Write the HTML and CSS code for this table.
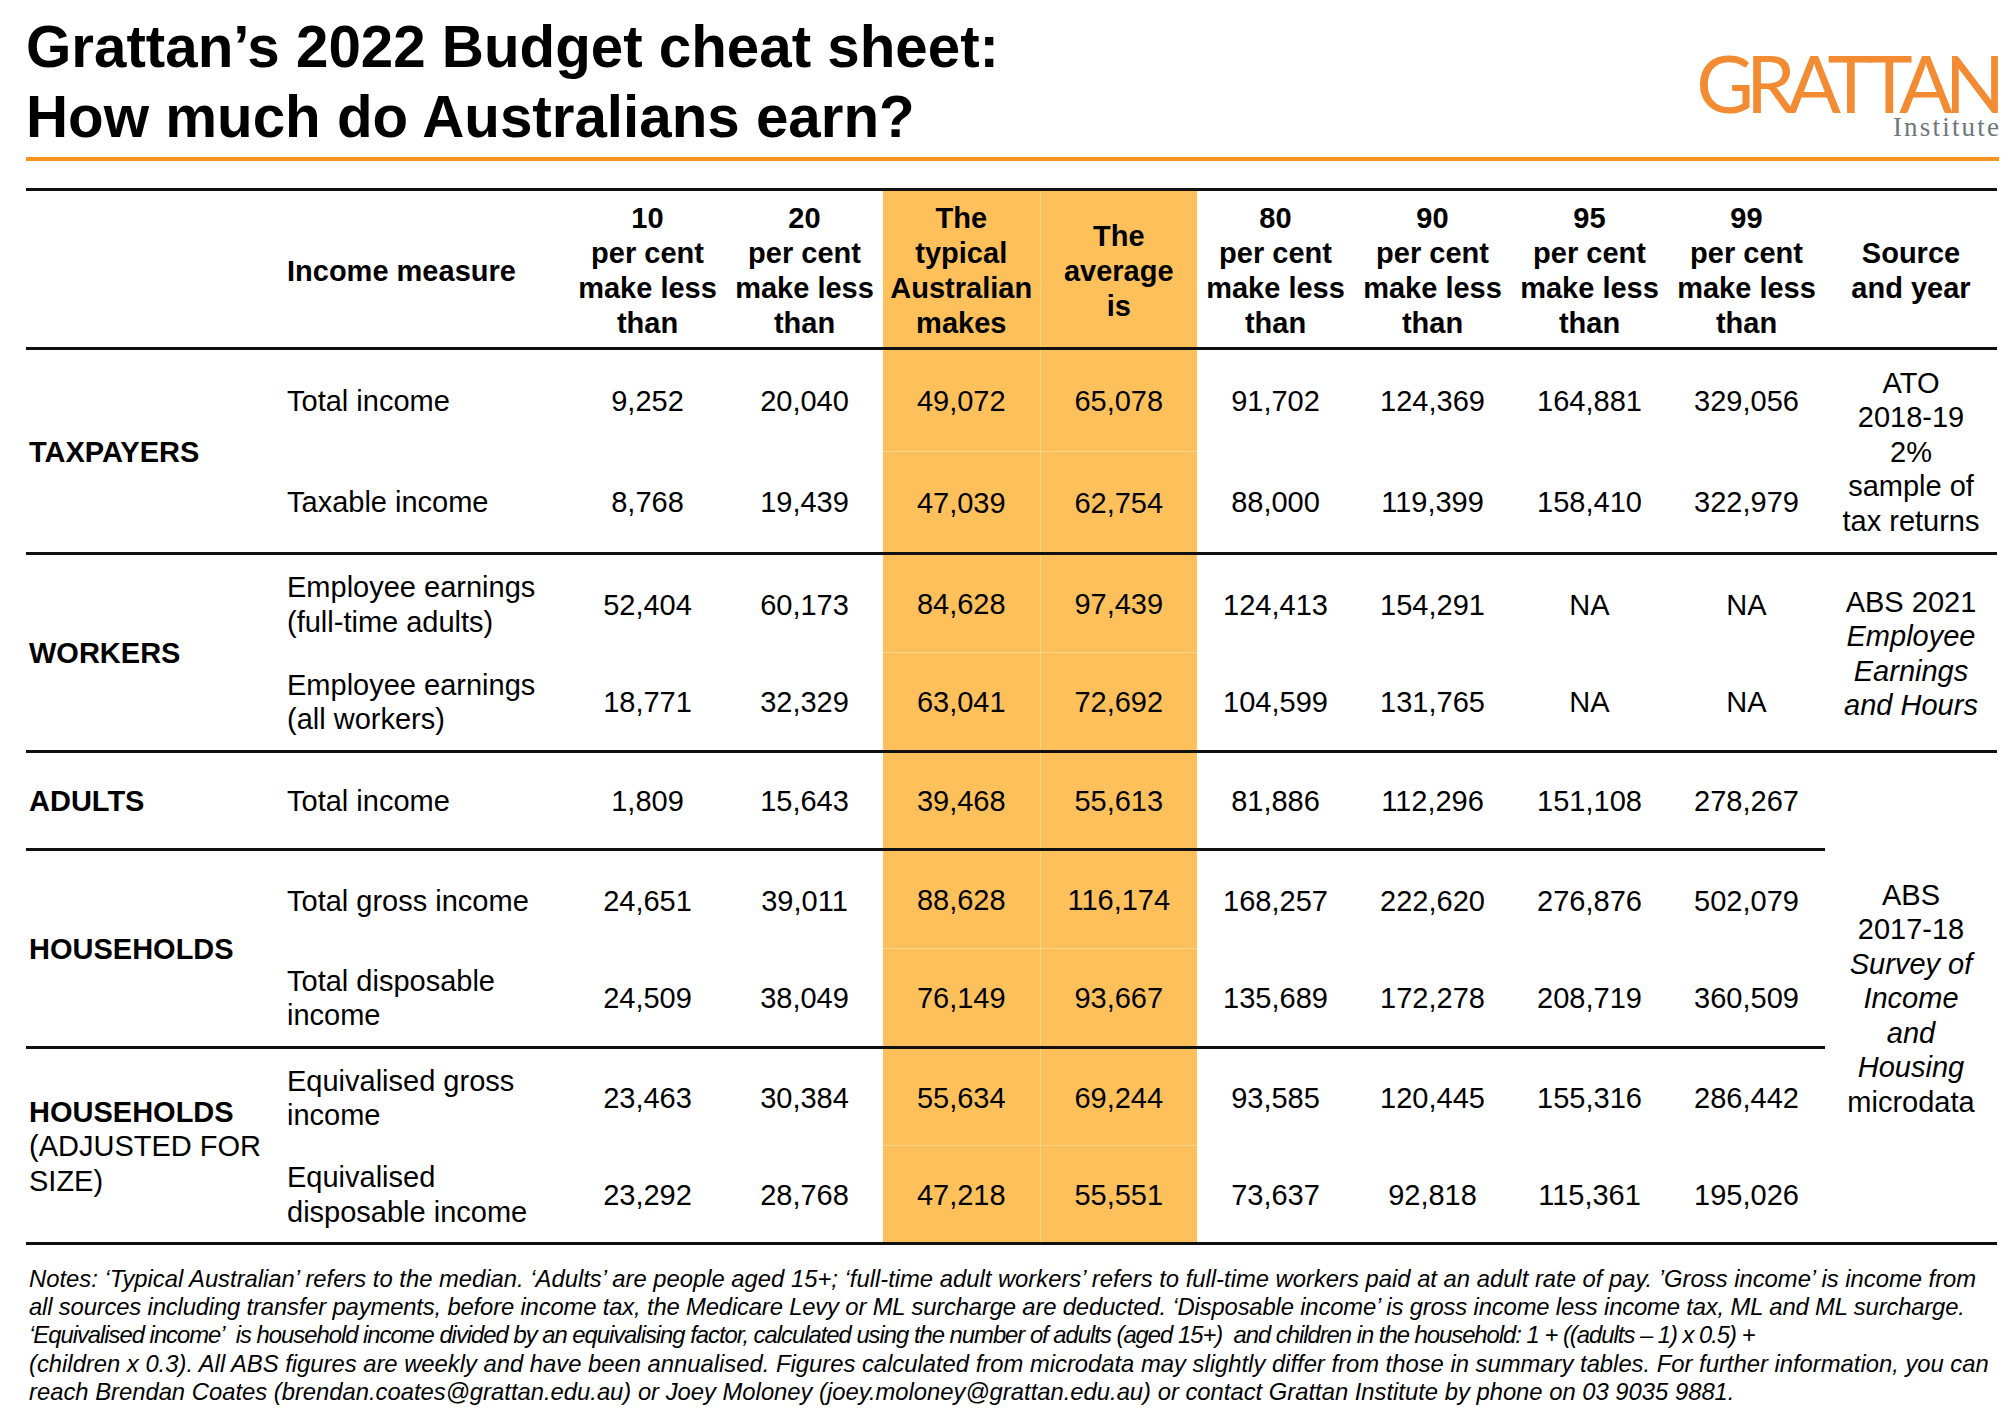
FILE: index.html
```html
<!DOCTYPE html>
<html lang="en">
<head>
<meta charset="utf-8">
<title>Grattan's 2022 Budget cheat sheet</title>
<link rel="stylesheet" href="styles.css">
</head>
<body>
<div class="page">
  <header class="header">
    <h1 class="title">Grattan’s 2022 Budget cheat sheet:<br>How much do Australians earn?</h1>
    <div class="logo">
      <div class="logo-main">GRATTAN</div>
      <div class="logo-sub">Institute</div>
    </div>
  </header>
  <div class="rule"></div>

  <table class="cheat">
    <colgroup>
      <col class="c-group">
      <col class="c-measure">
      <col class="c-num" span="8">
      <col class="c-src">
    </colgroup>
    <thead>
      <tr class="h-head">
        <th></th>
        <th class="measure-h">Income measure</th>
        <th>10<br>per cent<br>make less<br>than</th>
        <th>20<br>per cent<br>make less<br>than</th>
        <th class="hl typ">The<br>typical<br>Australian<br>makes</th>
        <th class="hl">The<br>average<br>is</th>
        <th>80<br>per cent<br>make less<br>than</th>
        <th>90<br>per cent<br>make less<br>than</th>
        <th>95<br>per cent<br>make less<br>than</th>
        <th>99<br>per cent<br>make less<br>than</th>
        <th>Source<br>and year</th>
      </tr>
    </thead>
    <tbody>
      <tr class="h-tax">
        <td class="group end" rowspan="2">TAXPAYERS</td>
        <td class="measure">Total income</td>
        <td>9,252</td><td>20,040</td><td class="hl typ">49,072</td><td class="hl">65,078</td>
        <td>91,702</td><td>124,369</td><td>164,881</td><td>329,056</td>
        <td class="src end" rowspan="2">ATO<br>2018-19<br>2%<br>sample of<br>tax returns</td>
      </tr>
      <tr class="h-tax sub">
        <td class="measure end">Taxable income</td>
        <td class="end">8,768</td><td class="end">19,439</td><td class="hl typ end">47,039</td><td class="hl end">62,754</td>
        <td class="end">88,000</td><td class="end">119,399</td><td class="end">158,410</td><td class="end">322,979</td>
      </tr>

      <tr class="h-wk">
        <td class="group end" rowspan="2">WORKERS</td>
        <td class="measure">Employee earnings (full-time adults)</td>
        <td>52,404</td><td>60,173</td><td class="hl typ">84,628</td><td class="hl">97,439</td>
        <td>124,413</td><td>154,291</td><td>NA</td><td>NA</td>
        <td class="src end" rowspan="2">ABS 2021<br><em>Employee<br>Earnings<br>and Hours</em></td>
      </tr>
      <tr class="h-wk sub">
        <td class="measure end">Employee earnings (all workers)</td>
        <td class="end">18,771</td><td class="end">32,329</td><td class="hl typ end">63,041</td><td class="hl end">72,692</td>
        <td class="end">104,599</td><td class="end">131,765</td><td class="end">NA</td><td class="end">NA</td>
      </tr>

      <tr class="h-std">
        <td class="group end">ADULTS</td>
        <td class="measure end">Total income</td>
        <td class="end">1,809</td><td class="end">15,643</td><td class="hl typ end">39,468</td><td class="hl end">55,613</td>
        <td class="end">81,886</td><td class="end">112,296</td><td class="end">151,108</td><td class="end">278,267</td>
        <td class="src end" rowspan="5">ABS<br>2017-18<br><em>Survey of<br>Income<br>and<br>Housing</em><br>microdata</td>
      </tr>

      <tr class="h-hh">
        <td class="group end" rowspan="2">HOUSEHOLDS</td>
        <td class="measure">Total gross income</td>
        <td>24,651</td><td>39,011</td><td class="hl typ">88,628</td><td class="hl">116,174</td>
        <td>168,257</td><td>222,620</td><td>276,876</td><td>502,079</td>
      </tr>
      <tr class="h-hh sub">
        <td class="measure end">Total disposable income</td>
        <td class="end">24,509</td><td class="end">38,049</td><td class="hl typ end">76,149</td><td class="hl end">93,667</td>
        <td class="end">135,689</td><td class="end">172,278</td><td class="end">208,719</td><td class="end">360,509</td>
      </tr>

      <tr class="h-std">
        <td class="group end" rowspan="2">HOUSEHOLDS <span class="group-note">(ADJUSTED FOR SIZE)</span></td>
        <td class="measure">Equivalised gross income</td>
        <td>23,463</td><td>30,384</td><td class="hl typ">55,634</td><td class="hl">69,244</td>
        <td>93,585</td><td>120,445</td><td>155,316</td><td>286,442</td>
      </tr>
      <tr class="h-std sub">
        <td class="measure end">Equivalised disposable income</td>
        <td class="end">23,292</td><td class="end">28,768</td><td class="hl typ end">47,218</td><td class="hl end">55,551</td>
        <td class="end">73,637</td><td class="end">92,818</td><td class="end">115,361</td><td class="end">195,026</td>
      </tr>
    </tbody>
  </table>

  <p class="notes">
    <span class="nl">Notes: ‘Typical Australian’ refers to the median. ‘Adults’ are people aged 15+; ‘full-time adult workers’ refers to full-time workers paid at an adult rate of pay. ’Gross income’ is income from</span>
    <span class="nl l2">all sources including transfer payments, before income tax, the Medicare Levy or ML surcharge are deducted. ‘Disposable income’ is gross income less income tax, ML and ML surcharge.</span>
    <span class="nl l3">‘Equivalised income’&nbsp; is household income divided by an equivalising factor, calculated using the number of adults (aged 15+)&nbsp; and children in the household: 1 + ((adults – 1) x 0.5) +</span>
    <span class="nl">(children x 0.3). All ABS figures are weekly and have been annualised. Figures calculated from microdata may slightly differ from those in summary tables. For further information, you can</span>
    <span class="nl">reach Brendan Coates (brendan.coates@grattan.edu.au) or Joey Moloney (joey.moloney@grattan.edu.au) or contact Grattan Institute by phone on 03 9035 9881.</span>
  </p>
</div>
</body>
</html>
```

FILE: styles.css
```css
html, body {
  margin: 0;
  padding: 0;
  background: #ffffff;
}

body {
  font-family: "Liberation Sans", Arial, sans-serif;
  color: #000000;
}

.page {
  margin-left: 26px;
  width: 1973px;
}

/* ---------- header ---------- */
.header {
  display: flex;
  justify-content: space-between;
  align-items: flex-start;
  padding-top: 12px;
  height: 140px;
}

.title {
  margin: 0;
  font-size: 58.3px;
  line-height: 70px;
  font-weight: 700;
}

.logo {
  display: flex;
  flex-direction: column;
  align-items: flex-end;
  margin-top: 42px;
}

.logo-main {
  font-family: Lato, "Open Sans", sans-serif;
  font-weight: 400;
  font-size: 79px;
  line-height: 58px;
  color: #f38b33;
  letter-spacing: -8px;
  margin-right: 2px;
}

.logo-sub {
  font-family: "Liberation Serif", "Times New Roman", serif;
  font-size: 27px;
  line-height: 22px;
  color: #6f777c;
  letter-spacing: 2.2px;
  margin-top: 4px;
  margin-right: -2.2px;
}

.rule {
  height: 4px;
  background: #f7931e;
  margin-top: 5px;
}

/* ---------- table ---------- */
.cheat {
  width: 1971px;
  border-collapse: collapse;
  table-layout: fixed;
  margin-top: 27px;
  border-top: 3px solid #111111;
}

.c-group { width: 257px; }
.c-measure { width: 286px; }
.c-num { width: 157px; }
.c-src { width: 172px; }

.cheat th,
.cheat td {
  padding: 2px 0 0 0;
  vertical-align: middle;
  text-align: center;
}

.cheat th {
  padding-top: 4px;
  font-size: 29px;
  line-height: 35px;
  font-weight: 700;
  border-bottom: 3px solid #111111;
}

.cheat td {
  font-size: 29px;
  line-height: 34.5px;
  font-weight: 400;
}

.h-head { height: 159px; }
.h-tax { height: 102.5px; }
.h-wk { height: 99px; }
.h-std { height: 98px; }
.h-hh { height: 99px; }

.cheat th.measure-h,
.cheat td.measure {
  text-align: left;
  padding-left: 4px;
}

.cheat td.group {
  text-align: left;
  padding-left: 3px;
  font-weight: 700;
  font-size: 29px;
}

.group-note {
  font-weight: 400;
}

.cheat .hl {
  background: #fec05a;
}

.cheat .typ {
  border-right: 1px solid #ffd58a;
}

.cheat tr.sub .hl {
  border-top: 1px solid #ffd58a;
}

.cheat td.end {
  border-bottom: 3px solid #111111;
}

/* ---------- notes ---------- */
.notes {
  margin: 20px 0 0 3px;
  width: 1958px;
  font-style: italic;
  font-size: 23.8px;
  line-height: 28.2px;
}

.nl {
  display: block;
  white-space: nowrap;
}

.l2 {
  letter-spacing: -0.15px;
}

.l3 {
  letter-spacing: -1px;
}
```
